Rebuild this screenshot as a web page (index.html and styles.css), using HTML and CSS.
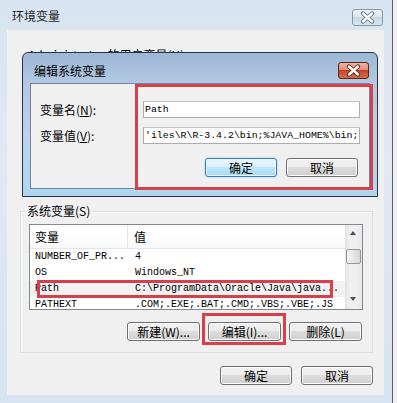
FILE: index.html
```html
<!DOCTYPE html>
<html lang="zh-CN">
<head>
    <meta charset="UTF-8">
    <meta name="viewport" content="width=device-width, initial-scale=1.0">
    <title>环境变量</title>
    <link rel="stylesheet" href="styles.css">
</head>
<body>
    <div class="window">
        <div class="titlebar">
            <span class="title">环境变量</span>
            <span class="close close-inactive">
                <svg width="31" height="17" viewBox="0 0 31 17">
                    <path d="M11 4.5 L20 12.5 M20 4.5 L11 12.5" stroke="#5d6b7e" stroke-width="4.2" stroke-linecap="round"/>
                    <path d="M11 4.5 L20 12.5 M20 4.5 L11 12.5" stroke="#ffffff" stroke-width="2.4" stroke-linecap="round"/>
                </svg>
            </span>
        </div>

        <div class="client">
            <div class="user-group">
                <span class="group-label">Administrator 的用户变量(U)</span>
            </div>

            <fieldset class="group">
                <legend>系统变量(S)</legend>
                <div class="list">
                    <div class="list-main">
                        <div class="list-head">
                            <span class="col1">变量</span>
                            <span class="col2">值</span>
                        </div>
                        <div class="row"><span class="col1">NUMBER_OF_PR...</span><span class="col2">4</span></div>
                        <div class="row"><span class="col1">OS</span><span class="col2">Windows_NT</span></div>
                        <div class="row row-selected"><span class="col1">Path</span><span class="col2">C:\ProgramData\Oracle\Java\java...</span></div>
                        <div class="row"><span class="col1">PATHEXT</span><span class="col2">.COM;.EXE;.BAT;.CMD;.VBS;.VBE;.JS</span></div>
                    </div>
                    <div class="scrollbar">
                        <div class="arrow arrow-up"></div>
                        <div class="track"><div class="thumb"></div></div>
                        <div class="arrow arrow-down"></div>
                    </div>
                    <div class="mark mark-row"></div>
                </div>
                <div class="btn-row">
                    <button>新建(W)...</button>
                    <span class="marked">
                        <button>编辑(I)...</button>
                        <span class="mark mark-button"></span>
                    </span>
                    <button>删除(L)</button>
                </div>
            </fieldset>

            <div class="dialog-buttons">
                <button>确定</button>
                <button>取消</button>
            </div>
        </div>

        <div class="child">
            <div class="child-title">
                <span class="title">编辑系统变量</span>
                <span class="close close-active">
                    <svg width="31" height="17" viewBox="0 0 31 17">
                        <path d="M11 4.5 L20 12.5 M20 4.5 L11 12.5" stroke="#5a2418" stroke-width="4.2" stroke-linecap="round"/>
                        <path d="M11 4.5 L20 12.5 M20 4.5 L11 12.5" stroke="#ffffff" stroke-width="2.4" stroke-linecap="round"/>
                    </svg>
                </span>
            </div>
            <div class="child-client">
                <div class="field">
                    <label>变量名(<u>N</u>):</label>
                    <input type="text" value="Path">
                </div>
                <div class="field">
                    <label>变量值(<u>V</u>):</label>
                    <input type="text" value="'iles\R\R-3.4.2\bin;%JAVA_HOME%\bin;">
                </div>
                <div class="child-buttons">
                    <button class="default">确定</button>
                    <button>取消</button>
                </div>
            </div>
            <div class="mark mark-fields"></div>
        </div>
    </div>
</body>
</html>
```

FILE: styles.css
```css
body {
    margin: 0;
    background-color: #f4edf3;
    font-family: "Noto Sans CJK SC", sans-serif;
    font-size: 12px;
    color: #000;
}

u {
    text-decoration: underline;
}

.window {
    position: relative;
    width: 393px;
    height: 403px;
    box-sizing: border-box;
    padding: 0 8px 8px 7px;
    display: flex;
    flex-direction: column;
    background: linear-gradient(#d8e4f1, #e1e9f3 40%, #d7e3f0);
    border-right: 1px solid #56606d;
}

.titlebar {
    height: 30px;
    display: flex;
    justify-content: space-between;
    align-items: flex-start;
}

.titlebar .title {
    margin-left: 5px;
    padding-top: 9px;
    line-height: 14px;
    color: #1e1e1e;
}

.close {
    display: block;
    width: 31px;
    height: 17px;
    box-sizing: border-box;
    border-radius: 3px;
    margin-top: 9px;
    margin-right: 1px;
}

.close svg {
    display: block;
    margin: -1px;
}

.close-inactive {
    border: 1px solid #8595ab;
    background: linear-gradient(#edf2f8 0%, #dde6f0 45%, #cbd8e7 50%, #d8e3ef 100%);
}

.close-active {
    border: 1px solid #5d2519;
    background: linear-gradient(#ebb5a3 0%, #dd8e78 45%, #c6432b 50%, #d3704f 100%);
}

.client {
    flex: 1;
    background-color: #f0f0f0;
    display: flex;
    flex-direction: column;
}

.user-group {
    height: 174px;
    box-sizing: border-box;
    padding: 16px 0 0 21px;
}

.group-label {
    line-height: 14px;
}

/* system variables group */
.group {
    margin: 0 11px 0 13px;
    padding: 0 0 11px 0;
    min-width: 0;
    border: 1px solid #d5dfe5;
    box-shadow: inset 1px 1px 0 #ffffff;
}

.group legend {
    margin-left: 4px;
    padding: 0 2px;
    line-height: 14px;
}

.list {
    position: relative;
    margin: 6px 9px 0 8px;
    height: 86px;
    box-sizing: border-box;
    border: 1px solid #828790;
    background-color: #fff;
    display: flex;
    overflow: hidden;
}

.list-main {
    flex: 1;
}

.list-head {
    height: 24px;
    box-sizing: border-box;
    display: flex;
    align-items: center;
    border-bottom: 1px solid #e5e5e5;
    background: linear-gradient(#ffffff 50%, #f7f8f9);
}

.list-head .col1 {
    height: 100%;
    display: flex;
    align-items: center;
    border-right: 1px solid #e5e5e5;
}

.col1 {
    width: 98px;
    padding-left: 5px;
    box-sizing: border-box;
    flex-shrink: 0;
}

.col2 {
    padding-left: 6px;
    white-space: nowrap;
}

.row {
    height: 16px;
    line-height: 16px;
    display: flex;
    font-family: "Liberation Mono", monospace;
    font-size: 10px;
}

.row .col1 {
    width: 99px;
}

.row-selected {
    background-color: #f2f2f2;
}

.scrollbar {
    width: 17px;
    display: flex;
    flex-direction: column;
    background: linear-gradient(to right, #e3e3e3, #f0f0f0 30%, #f0f0f0 70%, #e8e8e8);
}

.arrow {
    height: 17px;
    position: relative;
}

.arrow::after {
    content: "";
    position: absolute;
    left: 5px;
    width: 0;
    height: 0;
    border-left: 3.5px solid transparent;
    border-right: 3.5px solid transparent;
}

.arrow-up::after {
    top: 6px;
    border-bottom: 4px solid #4d4d4d;
}

.arrow-down::after {
    top: 5px;
    border-top: 4px solid #4d4d4d;
}

.track {
    flex: 1;
    padding-top: 7px;
}

.thumb {
    margin: 0 1px;
    height: 15px;
    box-sizing: border-box;
    border: 1px solid #979797;
    border-radius: 2px;
    background: linear-gradient(to right, #f3f3f3, #e6e6e6 50%, #d6d6d6);
}

/* red annotation frames */
.mark {
    position: absolute;
    box-sizing: border-box;
    border: 3px solid #d7404a;
}

.mark-row {
    left: 7px;
    top: 55px;
    width: 296px;
    height: 18px;
}

.mark-button {
    left: -6px;
    top: -9px;
    right: -5px;
    bottom: -4px;
}

.marked {
    position: relative;
    display: flex;
}

.mark-fields {
    left: 112px;
    top: 31px;
    width: 238px;
    height: 106px;
}

/* buttons */
button {
    font-family: "Noto Sans CJK SC", sans-serif;
    font-size: 12px;
    color: #000;
    width: 73px;
    height: 19px;
    padding: 0;
    line-height: 17px;
    border: 1px solid #707070;
    border-radius: 3px;
    background: linear-gradient(#f2f2f2 0%, #ebebeb 49%, #dddddd 50%, #cfcfcf 100%);
    box-shadow: inset 0 0 0 1px #fbfbfb;
}

button.default {
    border-color: #3c7fb1;
    background: linear-gradient(#eaf6fd 0%, #d9f0fc 49%, #bee6fd 50%, #a7d9f5 100%);
    box-shadow: inset 0 0 0 1px #e6f4fc, 0 0 2px #7fc6ee;
}

.btn-row {
    margin-top: 12px;
    padding-right: 10px;
    display: flex;
    justify-content: flex-end;
    gap: 8px;
}

.dialog-buttons {
    margin-top: 13px;
    padding-right: 11px;
    display: flex;
    justify-content: flex-end;
    gap: 9px;
}

.dialog-buttons button {
    width: 72px;
}

/* edit dialog on top */
.child {
    position: absolute;
    left: 22px;
    top: 52px;
    width: 356px;
    height: 145px;
    box-sizing: border-box;
    padding: 0 7px 7px 7px;
    display: flex;
    flex-direction: column;
    border: 1px solid #26364a;
    border-radius: 6px 6px 0 0;
    background: linear-gradient(#9db7d5 0%, #b2c8e1 20%, #bcd3ea 60%, #aed8ee 100%);
}

.child-title {
    height: 30px;
    display: flex;
    justify-content: space-between;
    align-items: flex-start;
}

.child-title .title {
    margin-left: 4px;
    padding-top: 11px;
    line-height: 14px;
}

.child-client {
    flex: 1;
    padding: 17px 9px 0 9px;
    border: 1px solid #6f86a3;
    background-color: #f0f0f0;
}

.field {
    display: flex;
    align-items: center;
    margin-bottom: 9px;
}

.field label {
    width: 103px;
    line-height: 14px;
}

.field input {
    width: 217px;
    height: 17px;
    box-sizing: border-box;
    margin: 0;
    padding: 0 1px;
    border: 1px solid #abadb3;
    border-top-color: #c2c4c9;
    background-color: #fff;
    font-family: "Liberation Mono", monospace;
    font-size: 9.9px;
    color: #000;
    outline: none;
}

.child-buttons {
    margin-top: 14px;
    padding-right: 2px;
    display: flex;
    justify-content: flex-end;
    gap: 9px;
}

.child-buttons button {
    width: 72px;
}
```
